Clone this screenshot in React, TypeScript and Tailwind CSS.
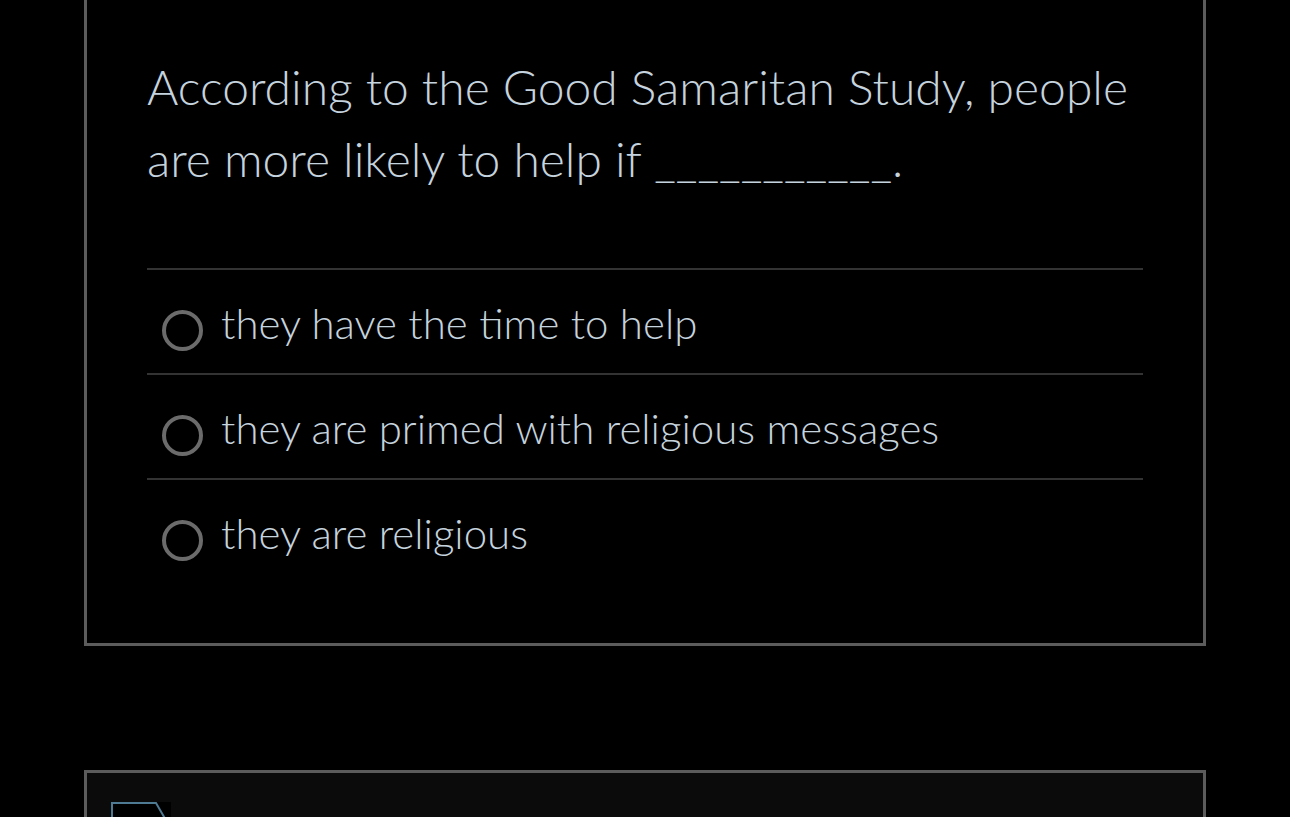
import { useState } from 'react';

const options = [
  'they have the time to help',
  'they are primed with religious messages',
  'they are religious',
];

function Radio({ checked }: { checked: boolean }) {
  return (
    <span className="mt-[12px] flex h-[41px] w-[41px] shrink-0 items-center justify-center rounded-full border-4 border-[#6b6b6b]">
      {checked && <span className="h-[19px] w-[19px] rounded-full bg-[#c7d3dd]" />}
    </span>
  );
}

export default function App() {
  const [picked, setPicked] = useState<number | null>(null);

  return (
    <div className="min-h-screen bg-black font-['Lato','Noto_Sans',sans-serif] font-light text-[#c5d3de]">
      <div className="mx-auto w-[1122px]">
        {/* question card */}
        <div className="border-x-[3px] border-b-[3px] border-[#5c5c5c] bg-black px-[60px] pt-[51px] pb-[60px]">
          <p className="text-[48px] leading-[72px]">
            According to the Good Samaritan Study, people are more likely to help if ___________.
          </p>

          <div className="mt-[73px]">
            {options.map((opt, i) => (
              <label
                key={opt}
                onClick={() => setPicked(i)}
                className="flex h-[105px] cursor-pointer items-start gap-[18px] border-t-2 border-[#333333] pl-[15px] pt-[28px]"
              >
                <Radio checked={picked === i} />
                <span className="text-[42px] leading-[1.2]">{opt}</span>
              </label>
            ))}
          </div>
        </div>

        {/* next card, cut off by the fold */}
        <div className="mt-[124px] h-[200px] border-[3px] border-[#5c5c5c] bg-[#0b0b0b] pl-[24px] pt-[29px]">
          <svg width="60" height="40" viewBox="0 0 60 40" className="block">
            <rect x="0" y="0" width="60" height="40" fill="#000" />
            <path d="M1 40 V1 H45 L56 20" fill="none" stroke="#4f7a93" strokeWidth="2" />
          </svg>
        </div>
      </div>
    </div>
  );
}
